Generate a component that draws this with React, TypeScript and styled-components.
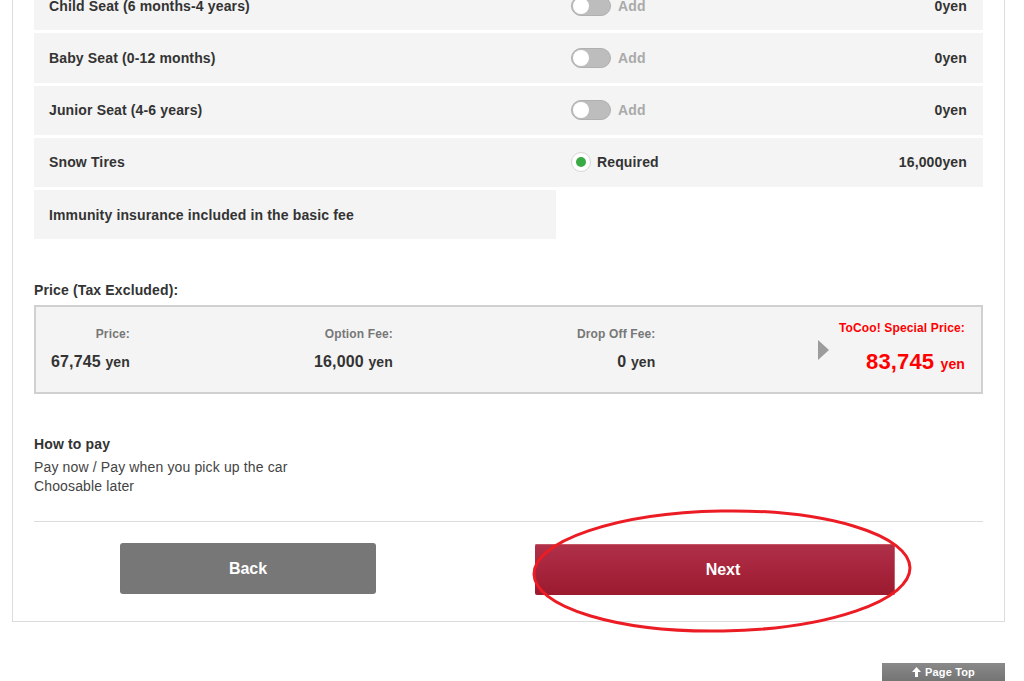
import styled, { createGlobalStyle } from "styled-components";

const GlobalStyle = createGlobalStyle`
  html, body {
    margin: 0;
    padding: 0;
    background: #fff;
    overflow: hidden;
  }
  body {
    font-family: "Liberation Sans", Arial, sans-serif;
    letter-spacing: 0.14px;
    color: #333;
  }
`;

const Page = styled.div`
  margin: 0 19px 0 12px;
`;

const Card = styled.div`
  margin-top: -20px;
  border: 1px solid #dcdcdc;
  padding: 0 21px 26px;
`;

const Options = styled.div`
  display: flex;
  flex-direction: column;
  gap: 3px;
`;

const OptionRow = styled.div`
  display: grid;
  grid-template-columns: 522px 1fr;
  height: 49.25px;
`;

const LabelCell = styled.div`
  background: #f4f4f4;
  display: flex;
  align-items: center;
  padding-left: 15px;
  font-size: 14px;
  font-weight: bold;
  color: #333;
`;

const ValueCell = styled.div`
  background: #f4f4f4;
  display: flex;
  align-items: center;
  padding: 0 16px 0 15px;
  font-size: 14px;
  font-weight: bold;
`;

const Toggle = styled.span`
  position: relative;
  width: 40px;
  height: 20px;
  border-radius: 10px;
  background: #bdbdbd;
  box-sizing: border-box;
  border: 1px solid #b0b0b0;
  flex-shrink: 0;

  &::after {
    content: "";
    position: absolute;
    left: 1px;
    top: 1px;
    width: 16px;
    height: 16px;
    border-radius: 50%;
    background: #fff;
  }
`;

const Radio = styled.span`
  position: relative;
  width: 20px;
  height: 20px;
  border-radius: 50%;
  background: #fff;
  border: 1px solid #d6d6d6;
  box-sizing: border-box;
  flex-shrink: 0;

  &::after {
    content: "";
    position: absolute;
    left: 4px;
    top: 4px;
    width: 10px;
    height: 10px;
    border-radius: 50%;
    background: #3aaa44;
  }
`;

const Choice = styled.span<{ $active?: boolean }>`
  margin-left: ${(p) => (p.$active ? "6px" : "7px")};
  color: ${(p) => (p.$active ? "#333" : "#aaa")};
`;

const Amount = styled.span`
  margin-left: auto;
  color: #333;
`;

const SectionTitle = styled.div<{ $top: number }>`
  margin-top: ${(p) => p.$top}px;
  font-size: 14px;
  line-height: 18px;
  font-weight: bold;
  color: #333;
`;

const PriceBox = styled.div`
  margin-top: 6px;
  border: 2px solid #d0d0d0;
  background: #f4f4f4;
  height: 85px;
  display: grid;
  grid-template-columns: 263px 263px 263px 1fr;
`;

const PriceCol = styled.div`
  padding: 20px 0 0 15px;
`;

const PriceInner = styled.div`
  display: inline-block;
  text-align: right;
`;

const PriceLabel = styled.div<{ $red?: boolean }>`
  font-size: 12px;
  line-height: 14px;
  font-weight: bold;
  color: ${(p) => (p.$red ? "#f00" : "#777")};
`;

const PriceValue = styled.div<{ $big?: boolean; $top: number }>`
  margin-top: ${(p) => p.$top}px;
  font-size: ${(p) => (p.$big ? "22px" : "16px")};
  line-height: ${(p) => (p.$big ? "26px" : "20px")};
  font-weight: bold;
  color: ${(p) => (p.$big ? "#f00" : "#333")};
  white-space: nowrap;

  small {
    font-size: 14px;
  }
`;

const SpecialCol = styled.div`
  display: flex;
  align-items: center;
  padding-right: 16px;
`;

const Arrow = styled.span`
  width: 0;
  height: 0;
  margin-left: -7px;
  border-top: 10px solid transparent;
  border-bottom: 10px solid transparent;
  border-left: 11px solid #9c9c9c;
`;

const SpecialInner = styled(PriceInner)`
  margin-left: auto;
  margin-top: -2px;
`;

const PayText = styled.div`
  margin-top: 5px;
  font-size: 14px;
  line-height: 19px;
  color: #444;
`;

const Divider = styled.hr`
  margin: 25px 0 0;
  border: 0;
  border-top: 1px solid #dcdcdc;
`;

const ButtonRow = styled.div`
  position: relative;
  display: flex;
  align-items: flex-start;
  margin-top: 21px;
`;

const Button = styled.button<{ $primary?: boolean }>`
  margin-left: ${(p) => (p.$primary ? "159px" : "86px")};
  margin-top: ${(p) => (p.$primary ? "1px" : "0")};
  width: ${(p) => (p.$primary ? "360px" : "256px")};
  height: 51px;
  padding: ${(p) => (p.$primary ? "0 0 0 16px" : "0")};
  border: 0;
  border-radius: ${(p) => (p.$primary ? "2px" : "3px")};
  background: ${(p) =>
    p.$primary ? "linear-gradient(#b1304a, #9c1a2e)" : "#777"};
  box-shadow: ${(p) =>
    p.$primary ? "inset 0 1px 0 #c65566, inset -1px 0 0 #c86070" : "none"};
  color: #fff;
  font-family: "Liberation Sans", Arial, sans-serif;
  font-size: 16px;
  font-weight: bold;
  cursor: pointer;
`;

const Mark = styled.svg`
  position: absolute;
  left: 496px;
  top: -35px;
  pointer-events: none;
`;

const Footer = styled.div`
  display: flex;
  justify-content: flex-end;
  margin-top: 41px;
`;

const PageTop = styled.a`
  display: flex;
  align-items: center;
  justify-content: center;
  gap: 4px;
  width: 123px;
  height: 22px;
  padding-bottom: 4px;
  box-sizing: border-box;
  background: linear-gradient(#8a8a8a, #6f6f6f);
  color: #fff;
  font-size: 11px;
  font-weight: bold;
  text-decoration: none;
`;

const seats = [
  "Child Seat (6 months-4 years)",
  "Baby Seat (0-12 months)",
  "Junior Seat (4-6 years)",
];

export default function App() {
  return (
    <>
      <GlobalStyle />
      <Page>
        <Card>
          <Options>
            {seats.map((s) => (
              <OptionRow key={s}>
                <LabelCell>{s}</LabelCell>
                <ValueCell>
                  <Toggle />
                  <Choice>Add</Choice>
                  <Amount>0yen</Amount>
                </ValueCell>
              </OptionRow>
            ))}
            <OptionRow>
              <LabelCell>Snow Tires</LabelCell>
              <ValueCell>
                <Radio />
                <Choice $active>Required</Choice>
                <Amount>16,000yen</Amount>
              </ValueCell>
            </OptionRow>
            <OptionRow>
              <LabelCell>Immunity insurance included in the basic fee</LabelCell>
            </OptionRow>
          </Options>

          <SectionTitle $top={42}>Price (Tax Excluded):</SectionTitle>
          <PriceBox>
            <PriceCol>
              <PriceInner>
                <PriceLabel>Price:</PriceLabel>
                <PriceValue $top={11}>
                  67,745 <small>yen</small>
                </PriceValue>
              </PriceInner>
            </PriceCol>
            <PriceCol>
              <PriceInner>
                <PriceLabel>Option Fee:</PriceLabel>
                <PriceValue $top={11}>
                  16,000 <small>yen</small>
                </PriceValue>
              </PriceInner>
            </PriceCol>
            <PriceCol>
              <PriceInner>
                <PriceLabel>Drop Off Fee:</PriceLabel>
                <PriceValue $top={11}>
                  0 <small>yen</small>
                </PriceValue>
              </PriceInner>
            </PriceCol>
            <SpecialCol>
              <Arrow />
              <SpecialInner>
                <PriceLabel $red>ToCoo! Special Price:</PriceLabel>
                <PriceValue $big $top={14}>
                  83,745 <small>yen</small>
                </PriceValue>
              </SpecialInner>
            </SpecialCol>
          </PriceBox>

          <SectionTitle $top={41}>How to pay</SectionTitle>
          <PayText>
            Pay now / Pay when you pick up the car
            <br />
            Choosable later
          </PayText>

          <Divider />

          <ButtonRow>
            <Button>Back</Button>
            <Button $primary>Next</Button>
            <Mark width="384" height="126" viewBox="0 0 384 126">
              <ellipse
                cx="192"
                cy="63"
                rx="188"
                ry="60"
                fill="none"
                stroke="#ec1c24"
                strokeWidth="3"
                transform="rotate(-1 192 63)"
              />
            </Mark>
          </ButtonRow>
        </Card>
        <Footer>
          <PageTop href="#">
            <svg width="9" height="10" viewBox="0 0 9 10">
              <path d="M4.5 0 L9 5 H6 V10 H3 V5 H0 Z" fill="#fff" />
            </svg>
            Page Top
          </PageTop>
        </Footer>
      </Page>
    </>
  );
}
